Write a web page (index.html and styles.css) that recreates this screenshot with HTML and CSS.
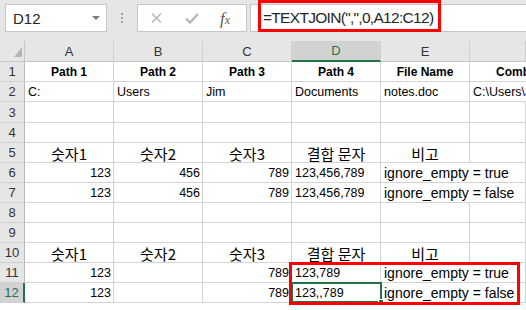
FILE: index.html
```html
<!DOCTYPE html>
<html>
<head>
<meta charset="utf-8">
<link rel="stylesheet" href="styles.css">
</head>
<body>
<div class="app">
  <div class="fbar">
    <div class="namebox"><span class="nbtext">D12</span><span class="caret"></span></div>
    <div class="grip"><i></i><i></i><i></i></div>
    <div class="fxbox">
      <svg class="ico-x" width="11" height="10" viewBox="0 0 11 10"><path d="M1 0.5 L10 9.5 M10 0.5 L1 9.5" stroke="#b3b3b3" stroke-width="1.3" fill="none"/></svg>
      <svg class="ico-ok" width="14" height="11" viewBox="0 0 14 11"><path d="M1 5.5 L5 9.5 L13 1" stroke="#b3b3b3" stroke-width="2.2" fill="none"/></svg>
      <span class="fx">f<span class="fxs">x</span></span>
    </div>
    <div class="formula"><span class="ftext">=TEXTJOIN(",",0,A12:C12)</span></div>
  </div>

  <div class="sheet">
    <div class="h corner"><svg width="8" height="10" viewBox="0 0 8 10"><polygon points="8,0 8,10 0,10" fill="#b5b5b5"/></svg></div>
    <div class="h col">A</div><div class="h col">B</div><div class="h col">C</div><div class="h col sel">D</div><div class="h col">E</div><div class="h col"></div>

    <div class="h row">1</div>
    <div class="c ctr b">Path 1</div><div class="c ctr b">Path 2</div><div class="c ctr b">Path 3</div><div class="c ctr b">Path 4</div><div class="c ctr b">File Name</div><div class="c ctr b clip">Combined Path</div>

    <div class="h row">2</div>
    <div class="c">C:</div><div class="c">Users</div><div class="c">Jim</div><div class="c">Documents</div><div class="c">notes.doc</div><div class="c clip">C:\Users\Jim\Documents\notes.doc</div>

    <div class="h row">3</div>
    <div class="c"></div><div class="c"></div><div class="c"></div><div class="c"></div><div class="c"></div><div class="c"></div>

    <div class="h row">4</div>
    <div class="c"></div><div class="c"></div><div class="c"></div><div class="c"></div><div class="c"></div><div class="c"></div>

    <div class="h row">5</div>
    <div class="c ctr ko">숫자1</div><div class="c ctr ko">숫자2</div><div class="c ctr ko">숫자3</div><div class="c ctr ko">결합 문자</div><div class="c ctr ko">비고</div><div class="c"></div>

    <div class="h row">6</div>
    <div class="c r">123</div><div class="c r">456</div><div class="c r">789</div><div class="c">123,456,789</div><div class="c note ov">ignore_empty = true</div><div class="c"></div>

    <div class="h row">7</div>
    <div class="c r">123</div><div class="c r">456</div><div class="c r">789</div><div class="c">123,456,789</div><div class="c note ov">ignore_empty = false</div><div class="c"></div>

    <div class="h row">8</div>
    <div class="c"></div><div class="c"></div><div class="c"></div><div class="c"></div><div class="c"></div><div class="c"></div>

    <div class="h row">9</div>
    <div class="c"></div><div class="c"></div><div class="c"></div><div class="c"></div><div class="c"></div><div class="c"></div>

    <div class="h row">10</div>
    <div class="c ctr ko">숫자1</div><div class="c ctr ko">숫자2</div><div class="c ctr ko">숫자3</div><div class="c ctr ko">결합 문자</div><div class="c ctr ko">비고</div><div class="c"></div>

    <div class="h row">11</div>
    <div class="c r">123</div><div class="c"></div><div class="c r">789</div><div class="c">123,789</div><div class="c note ov">ignore_empty = true</div><div class="c"></div>

    <div class="h row selrow">12</div>
    <div class="c r">123</div><div class="c"></div><div class="c r">789</div><div class="c">123,,789</div><div class="c note ov">ignore_empty = false</div><div class="c"></div>
  </div>

  <div class="selbox"></div>
  <div class="handle"></div>
  <div class="redbox red-formula"></div>
  <div class="redbox red-cells"></div>
</div>
</body>
</html>
```

FILE: styles.css
```css
html, body {
  margin: 0;
  padding: 0;
}
body {
  width: 526px;
  height: 310px;
  overflow: hidden;
  background: #ffffff;
  font-family: "Liberation Sans", Arial, sans-serif;
  color: #000;
}
.app {
  position: relative;
  width: 526px;
  height: 310px;
  overflow: hidden;
}

/* formula bar */
.fbar {
  height: 41px;
  background: #e6e6e6;
  display: flex;
  align-items: flex-start;
  padding: 4px 0 0 5px;
  box-sizing: border-box;
}
.namebox {
  width: 102px;
  height: 28px;
  box-sizing: border-box;
  background: #fff;
  border: 1px solid #c6c6c6;
  display: flex;
  align-items: center;
  justify-content: space-between;
  padding: 0 6px 0 7px;
}
.nbtext {
  font-size: 15px;
  color: #262626;
}
.caret {
  width: 0;
  height: 0;
  border-left: 4px solid transparent;
  border-right: 4px solid transparent;
  border-top: 4px solid #7a7a7a;
}
.grip {
  width: 30px;
  height: 28px;
  display: flex;
  flex-direction: column;
  align-items: center;
  justify-content: center;
  gap: 2px;
}
.grip i {
  display: block;
  width: 2px;
  height: 2px;
  background: #a0a0a0;
}
.fxbox {
  width: 110px;
  height: 28px;
  box-sizing: border-box;
  background: #fff;
  border: 1px solid #c6c6c6;
  display: flex;
  align-items: center;
  padding-left: 13px;
}
.ico-ok {
  margin-left: 23px;
}
.fx {
  margin-left: 21px;
  font-family: "Liberation Serif", "Times New Roman", serif;
  font-style: italic;
  font-size: 17px;
  color: #5a5a5a;
  line-height: 1;
}
.fxs {
  font-size: 12px;
}
.formula {
  flex: 1;
  margin-left: 3px;
  height: 28px;
  box-sizing: border-box;
  background: #fff;
  border: 1px solid #c6c6c6;
  border-right: none;
  display: flex;
  align-items: center;
  padding-left: 12px;
}
.ftext {
  font-size: 15.5px;
  letter-spacing: -0.7px;
  color: #262626;
  white-space: nowrap;
}

/* sheet grid */
.sheet {
  display: grid;
  grid-template-columns: 25px 89px 89px 89px 89px 89px 56px;
  grid-template-rows: 21px 20px 20px 21px repeat(9, 20px);
  width: 526px;
}
.h {
  background: #e6e6e6;
  box-sizing: border-box;
  border-right: 1px solid #c6c6c6;
  border-bottom: 1px solid #c6c6c6;
  font-size: 13px;
  color: #333;
  display: flex;
  align-items: center;
  justify-content: center;
}
.corner {
  justify-content: flex-end;
  align-items: flex-end;
  padding: 0 2px 4px 0;
}
.col {
  border-right: 1px solid #d0d0d0;
}
.col.sel {
  background: #d2d2d2;
  color: #217346;
  border-bottom: 2px solid #217346;
}
.row {
  border-right: 1px solid #b8b8b8;
  border-bottom: 1px solid #d0d0d0;
}
.row.selrow {
  background: #d2d2d2;
  color: #217346;
  border-right: 2px solid #217346;
}
.c {
  box-sizing: border-box;
  border-right: 1px solid #d4d4d4;
  border-bottom: 1px solid #d4d4d4;
  display: flex;
  align-items: flex-end;
  padding: 0 3px 1px 3px;
  font-size: 12.5px;
  line-height: 15px;
  white-space: nowrap;
  overflow: visible;
  min-width: 0;
}
.c.clip {
  overflow: hidden;
  border-right: none;
}
.c.ctr.clip {
  justify-content: flex-start;
  padding-left: 26px;
}
.c.r {
  justify-content: flex-end;
  padding-right: 2px;
}
.c.ctr {
  justify-content: center;
}
.c.b {
  font-weight: bold;
  font-size: 12px;
}
.c.ko {
  font-family: "Noto Sans CJK KR", "Liberation Sans", sans-serif;
  font-size: 15px;
  line-height: 17px;
  padding-bottom: 0;
}
.c.note {
  font-size: 14px;
}
.c.ov {
  border-right-color: transparent;
}

/* overlays */
.selbox {
  position: absolute;
  left: 291px;
  top: 282px;
  width: 91px;
  height: 21px;
  box-sizing: border-box;
  border: 2px solid #217346;
}
.handle {
  position: absolute;
  left: 378px;
  top: 299px;
  width: 6px;
  height: 6px;
  box-sizing: border-box;
  background: #217346;
  border: 1px solid #fff;
}
.redbox {
  position: absolute;
  box-sizing: border-box;
  border: 3px solid #ff0000;
}
.red-formula {
  left: 258px;
  top: 0;
  width: 183px;
  height: 32px;
}
.red-cells {
  left: 289px;
  top: 262px;
  width: 231px;
  height: 43px;
}
```
